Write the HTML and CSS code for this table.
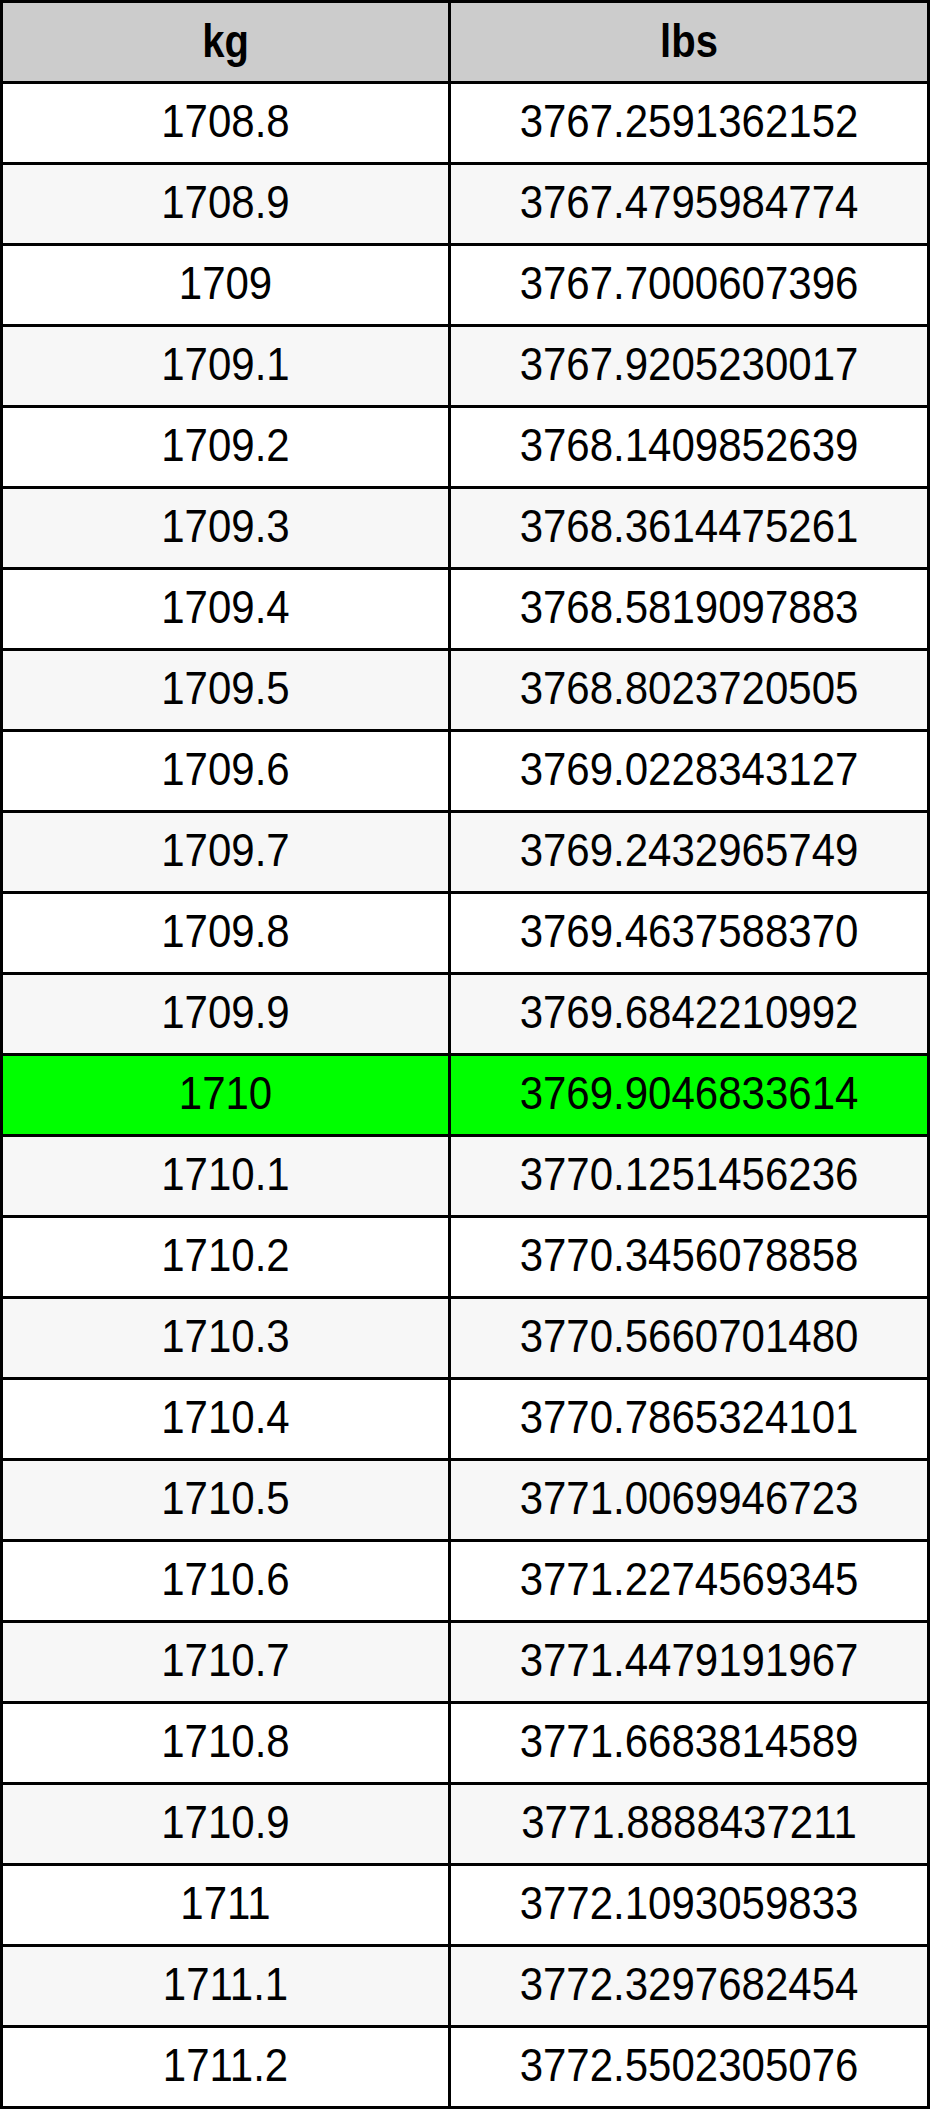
FILE: index.html
```html
<!DOCTYPE html>
<html>
<head>
<meta charset="utf-8">
<link rel="stylesheet" href="styles.css">
</head>
<body>
<table class="conv">
<thead>
<tr><th class="c1"><span>kg</span></th><th class="c2"><span>lbs</span></th></tr>
</thead>
<tbody>
<tr><td><span>1708.8</span></td><td><span>3767.2591362152</span></td></tr>
<tr><td><span>1708.9</span></td><td><span>3767.4795984774</span></td></tr>
<tr><td><span>1709</span></td><td><span>3767.7000607396</span></td></tr>
<tr><td><span>1709.1</span></td><td><span>3767.9205230017</span></td></tr>
<tr><td><span>1709.2</span></td><td><span>3768.1409852639</span></td></tr>
<tr><td><span>1709.3</span></td><td><span>3768.3614475261</span></td></tr>
<tr><td><span>1709.4</span></td><td><span>3768.5819097883</span></td></tr>
<tr><td><span>1709.5</span></td><td><span>3768.8023720505</span></td></tr>
<tr><td><span>1709.6</span></td><td><span>3769.0228343127</span></td></tr>
<tr><td><span>1709.7</span></td><td><span>3769.2432965749</span></td></tr>
<tr><td><span>1709.8</span></td><td><span>3769.4637588370</span></td></tr>
<tr><td><span>1709.9</span></td><td><span>3769.6842210992</span></td></tr>
<tr class="hl"><td><span>1710</span></td><td><span>3769.9046833614</span></td></tr>
<tr><td><span>1710.1</span></td><td><span>3770.1251456236</span></td></tr>
<tr><td><span>1710.2</span></td><td><span>3770.3456078858</span></td></tr>
<tr><td><span>1710.3</span></td><td><span>3770.5660701480</span></td></tr>
<tr><td><span>1710.4</span></td><td><span>3770.7865324101</span></td></tr>
<tr><td><span>1710.5</span></td><td><span>3771.0069946723</span></td></tr>
<tr><td><span>1710.6</span></td><td><span>3771.2274569345</span></td></tr>
<tr><td><span>1710.7</span></td><td><span>3771.4479191967</span></td></tr>
<tr><td><span>1710.8</span></td><td><span>3771.6683814589</span></td></tr>
<tr><td><span>1710.9</span></td><td><span>3771.8888437211</span></td></tr>
<tr><td><span>1711</span></td><td><span>3772.1093059833</span></td></tr>
<tr><td><span>1711.1</span></td><td><span>3772.3297682454</span></td></tr>
<tr><td><span>1711.2</span></td><td><span>3772.5502305076</span></td></tr>
</tbody>
</table>
</body>
</html>
```

FILE: styles.css
```css
html, body {
  margin: 0;
  padding: 0;
  background: #ffffff;
}

.conv {
  width: 930px;
  table-layout: fixed;
  border-collapse: separate;
  border-spacing: 0;
  border-top: 3px solid #000;
  border-left: 3px solid #000;
  font-family: "Liberation Sans", Arial, sans-serif;
  font-size: 42px;
  color: #000;
}

.conv th,
.conv td {
  box-sizing: border-box;
  height: 81px;
  padding: 0 0 2px 0;
  border-right: 3px solid #000;
  border-bottom: 3px solid #000;
  text-align: center;
  vertical-align: middle;
  font-weight: normal;
  line-height: 1;
}

.conv th span,
.conv td span {
  display: inline-block;
  transform: scaleY(1.09);
}

.conv th {
  background: #cccccc;
  font-weight: bold;
  font-size: 40px;
}

.conv th span {
  transform: scaleY(1.15);
}

.conv .c1 {
  width: 448px;
}

.conv tbody tr:nth-child(odd) td {
  background: #ffffff;
}

.conv tbody tr:nth-child(even) td {
  background: #f7f7f7;
}

.conv tbody tr.hl td {
  background: #00ff00;
}
```
